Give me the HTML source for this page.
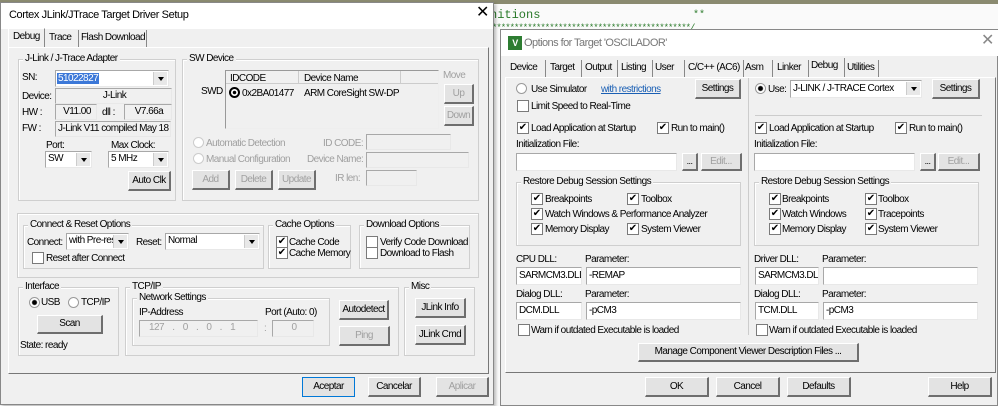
<!DOCTYPE html>
<html><head><style>
*{box-sizing:border-box;margin:0;padding:0}
body{width:998px;height:406px;overflow:hidden;position:relative;background:#fafafa;font-family:"Liberation Sans",sans-serif;font-size:10px;letter-spacing:-0.55px;color:#000}
div,span{position:absolute}
.t{white-space:nowrap;line-height:13px}
.gr{color:#a0a0a0}
.f{background:#fff;border:1px solid #a8a8a8;border-right-color:#e8e8e8;border-bottom-color:#e8e8e8;white-space:nowrap;overflow:hidden;line-height:14px;padding-left:2px}
.fd{background:#f0f0f0}
.b{background:#e3e3e3;border:1px solid #fff;border-right:2px solid #6e6e6e;border-bottom:2px solid #6e6e6e;text-align:center;white-space:nowrap}
.g{border:1px solid #cfcfcf;box-shadow:1px 1px 0 #fff inset}
.gt{background:#f0f0f0;padding:0 2px;top:-8px;left:4px;white-space:nowrap;line-height:13px}
.cb{width:12px;height:12px;background:#fff;border:1px solid #7a7a7a;font-size:10px;line-height:10px;text-align:center;letter-spacing:0}
.rd{width:11px;height:11px;border-radius:50%;background:#fff;border:1px solid #9a9a9a}
.dd{width:14px;height:13px;right:1px;top:1px;background:#e8e8e8;border-left:1px solid #ccc}
.dd:after{content:"";position:absolute;left:4px;top:5px;border:3px solid transparent;border-top:4px solid #000}
.tab{top:0;height:17px;line-height:16px;white-space:nowrap;border-right:1px solid #888}
</style></head><body>
<div style="left:0;top:0;width:998px;height:4px;background:#8a8a70"></div>
<div class="t" style="left:490px;top:9px;font-family:'Liberation Mono',monospace;font-size:12px;letter-spacing:0;color:#2a7a2a">nitions</div>
<div class="t" style="left:693px;top:9px;font-family:'Liberation Mono',monospace;font-size:10px;letter-spacing:0;color:#2a7a2a">**</div>
<div class="t" style="left:492px;top:22px;font-family:'Liberation Mono',monospace;font-size:9px;color:#2a7a2a;letter-spacing:-1px">*********************************************/</div>

<!-- RIGHT DIALOG -->
<div style="left:500px;top:29px;width:498px;height:377px;background:#f0f0f0;border:1px solid #888">
 <div style="left:0;top:0;width:497px;height:26px;background:#fff"></div>
 <div style="left:7px;top:6px;width:14px;height:14px;background:#2e7d32;color:#fff;font-size:9px;text-align:center;line-height:14px;font-weight:bold">V</div>
 <div class="t" style="left:23px;top:7px;font-size:11px;color:#777">Options for Target 'OSCILADOR'</div>
 <div class="t" style="left:480px;top:4px;font-size:16px;color:#888">✕</div>
 <div style="left:4px;top:30px;width:490px;height:17px">
  <span class="tab" style="left:5px;width:36px">Device</span>
  <span class="tab" style="left:45px;width:32px">Target</span>
  <span class="tab" style="left:80px;width:33px">Output</span>
  <span class="tab" style="left:116px;width:32px">Listing</span>
  <span class="tab" style="left:150px;width:30px">User</span>
  <span class="tab" style="left:183px;width:56px">C/C++ (AC6)</span>
  <span class="tab" style="left:240px;width:28px">Asm</span>
  <span class="tab" style="left:272px;width:32px">Linker</span>
  <span class="tab" style="left:306px;top:-2px;width:34px;height:19px;background:#f0f0f0">Debug</span>
  <span class="tab" style="left:342px;width:32px">Utilities</span>
 </div>
 <div style="left:4px;top:47px;width:491px;height:296px;border:1px solid #fff;border-right:1px solid #777;border-bottom:1px solid #777"></div>
 <div style="left:247px;top:48px;width:1px;height:257px;background:#ccc"></div>
</div>
<div class="rd" style="left:516px;top:83px"></div><div class="t" style="left:531px;top:83px">Use Simulator</div>
<div class="t" style="left:601px;top:83px;color:#1a5fb4;text-decoration:underline">with restrictions</div>
<div class="b" style="left:695px;top:79px;width:46px;height:20px;line-height:17px">Settings</div>
<div class="cb" style="left:517px;top:100px"></div><div class="t" style="left:531px;top:100px">Limit Speed to Real-Time</div>
<div class="rd" style="left:755px;top:83px;background:radial-gradient(#000 2px,#fff 3px)"></div><div class="t" style="left:768px;top:83px">Use:</div>
<div class="f" style="left:790px;top:80px;width:132px;height:18px;line-height:15px">J-LINK / J-TRACE Cortex<span class="dd"></span></div>
<div class="b" style="left:932px;top:79px;width:48px;height:20px;line-height:17px">Settings</div>
<div style="left:755px;top:115px;width:227px;height:1px;background:#ccc"></div>

<div class="cb" style="left:517px;top:122px">✔</div><div class="t" style="left:531px;top:122px">Load Application at Startup</div>
<div class="cb" style="left:657px;top:122px">✔</div><div class="t" style="left:671px;top:122px">Run to main()</div>
<div class="t" style="left:516px;top:138px">Initialization File:</div>
<div class="f" style="left:516px;top:153px;width:161px;height:18px"></div>
<div class="b" style="left:682px;top:153px;width:16px;height:18px;font-size:9px;line-height:14px">...</div>
<div class="b gr" style="left:701px;top:153px;width:41px;height:18px;line-height:15px">Edit...</div>
<div class="g" style="left:516px;top:182px;width:225px;height:64px"><span class="gt">Restore Debug Session Settings</span></div>
<div class="cb" style="left:531px;top:193px">✔</div><div class="t" style="left:545px;top:193px">Breakpoints</div>
<div class="cb" style="left:627px;top:193px">✔</div><div class="t" style="left:641px;top:193px">Toolbox</div>
<div class="cb" style="left:531px;top:208px">✔</div><div class="t" style="left:545px;top:208px">Watch Windows &amp; Performance Analyzer</div>
<div class="cb" style="left:531px;top:223px">✔</div><div class="t" style="left:545px;top:223px">Memory Display</div>
<div class="cb" style="left:627px;top:223px">✔</div><div class="t" style="left:641px;top:223px">System Viewer</div>
<div class="t" style="left:516px;top:253px">CPU DLL:</div><div class="t" style="left:585px;top:253px">Parameter:</div>
<div class="f" style="left:516px;top:267px;width:66px;height:18px;line-height:15px">SARMCM3.DLL</div>
<div class="f" style="left:586px;top:267px;width:155px;height:18px;line-height:15px">-REMAP</div>
<div class="t" style="left:516px;top:288px">Dialog DLL:</div><div class="t" style="left:585px;top:288px">Parameter:</div>
<div class="f" style="left:516px;top:302px;width:66px;height:18px;line-height:15px">DCM.DLL</div>
<div class="f" style="left:586px;top:302px;width:155px;height:18px;line-height:15px">-pCM3</div>
<div class="cb" style="left:518px;top:324px"></div><div class="t" style="left:531px;top:324px">Warn if outdated Executable is loaded</div>

<div class="cb" style="left:755px;top:122px">✔</div><div class="t" style="left:769px;top:122px">Load Application at Startup</div>
<div class="cb" style="left:895px;top:122px">✔</div><div class="t" style="left:909px;top:122px">Run to main()</div>
<div class="t" style="left:754px;top:138px">Initialization File:</div>
<div class="f" style="left:754px;top:153px;width:161px;height:18px"></div>
<div class="b" style="left:920px;top:153px;width:16px;height:18px;font-size:9px;line-height:14px">...</div>
<div class="b gr" style="left:938px;top:153px;width:42px;height:18px;line-height:15px">Edit...</div>
<div class="g" style="left:754px;top:182px;width:225px;height:64px"><span class="gt">Restore Debug Session Settings</span></div>
<div class="cb" style="left:769px;top:193px">✔</div><div class="t" style="left:782px;top:193px">Breakpoints</div>
<div class="cb" style="left:865px;top:193px">✔</div><div class="t" style="left:878px;top:193px">Toolbox</div>
<div class="cb" style="left:769px;top:208px">✔</div><div class="t" style="left:782px;top:208px">Watch Windows</div>
<div class="cb" style="left:865px;top:208px">✔</div><div class="t" style="left:878px;top:208px">Tracepoints</div>
<div class="cb" style="left:769px;top:223px">✔</div><div class="t" style="left:782px;top:223px">Memory Display</div>
<div class="cb" style="left:865px;top:223px">✔</div><div class="t" style="left:878px;top:223px">System Viewer</div>
<div class="t" style="left:754px;top:253px">Driver DLL:</div><div class="t" style="left:822px;top:253px">Parameter:</div>
<div class="f" style="left:755px;top:267px;width:64px;height:18px;line-height:15px">SARMCM3.DLL</div>
<div class="f" style="left:823px;top:267px;width:155px;height:18px"></div>
<div class="t" style="left:754px;top:288px">Dialog DLL:</div><div class="t" style="left:822px;top:288px">Parameter:</div>
<div class="f" style="left:755px;top:302px;width:64px;height:18px;line-height:15px">TCM.DLL</div>
<div class="f" style="left:823px;top:302px;width:155px;height:18px;line-height:15px">-pCM3</div>
<div class="cb" style="left:756px;top:324px"></div><div class="t" style="left:769px;top:324px">Warn if outdated Executable is loaded</div>
<div class="b" style="left:638px;top:343px;width:221px;height:19px;line-height:16px">Manage Component Viewer Description Files ...</div>
<div class="b" style="left:645px;top:377px;width:64px;height:20px;line-height:17px">OK</div>
<div class="b" style="left:716px;top:377px;width:64px;height:20px;line-height:17px">Cancel</div>
<div class="b" style="left:787px;top:377px;width:64px;height:20px;line-height:17px">Defaults</div>
<div class="b" style="left:928px;top:377px;width:64px;height:20px;line-height:17px">Help</div>

<!-- LEFT DIALOG -->
<div style="left:0;top:2px;width:494px;height:403px;background:#f0f0f0;border:1px solid #888;box-shadow:2px 2px 3px rgba(0,0,0,.25)">
 <div style="left:0;top:0;width:492px;height:26px;background:#fff"></div>
 <div class="t" style="left:8px;top:6px;font-size:11px;letter-spacing:-0.4px">Cortex JLink/JTrace Target Driver Setup</div>
 <div class="t" style="left:475px;top:3px;font-size:16px">✕</div>
</div>
<div style="left:8px;top:29px;width:140px;height:18px">
 <span class="tab" style="left:0;top:-1px;width:37px;height:19px;padding-left:4px;border:1px solid #fff;border-right:1px solid #888;border-bottom:none">Debug</span>
 <span class="tab" style="left:41px;top:1px;width:30px;padding-left:0">Trace</span>
 <span class="tab" style="left:73px;top:1px;width:66px">Flash Download</span>
</div>
<div style="left:8px;top:47px;width:481px;height:327px;border:1px solid #fff;border-right:1px solid #777;border-bottom:1px solid #777"></div>

<div class="g" style="left:18px;top:59px;width:158px;height:142px"><span class="gt">J-Link / J-Trace Adapter</span></div>
<div class="t" style="left:22px;top:71px">SN:</div>
<div class="f" style="left:55px;top:70px;width:114px;height:17px;padding:1px"><span style="position:static;background:#3c78d8;color:#fff;padding:0 1px">51022827</span><span class="dd"></span></div>
<div class="t" style="left:22px;top:90px">Device:</div>
<div class="f fd" style="left:55px;top:88px;width:117px;height:16px;text-align:center">J-Link</div>
<div class="t" style="left:22px;top:106px">HW :</div>
<div class="f fd" style="left:55px;top:104px;width:42px;height:16px;text-align:center">V11.00</div>
<div class="t" style="left:102px;top:106px">dll :</div>
<div class="f fd" style="left:124px;top:104px;width:48px;height:16px;text-align:center">V7.66a</div>
<div class="t" style="left:22px;top:122px">FW :</div>
<div class="f fd" style="left:55px;top:121px;width:116px;height:16px">J-Link V11 compiled May 18 2</div>
<div class="t" style="left:46px;top:139px">Port:</div>
<div class="t" style="left:111px;top:139px">Max Clock:</div>
<div class="f" style="left:45px;top:151px;width:47px;height:17px">SW<span class="dd"></span></div>
<div class="f" style="left:108px;top:151px;width:61px;height:17px">5 MHz<span class="dd"></span></div>
<div class="b" style="left:128px;top:171px;width:43px;height:20px;line-height:17px">Auto Clk</div>

<div class="g" style="left:182px;top:59px;width:297px;height:142px"><span class="gt">SW Device</span></div>
<div class="t" style="left:201px;top:85px">SWD</div>
<div style="left:225px;top:70px;width:214px;height:59px;background:#f0f0f0;border:1px solid #999;border-right-color:#eee;border-bottom-color:#eee"></div>
<div style="left:226px;top:71px;width:212px;height:13px;border-bottom:1px solid #ccc"></div>
<div style="left:298px;top:71px;width:1px;height:13px;background:#ccc"></div>
<div style="left:400px;top:71px;width:1px;height:13px;background:#ccc"></div>
<div class="t" style="left:230px;top:72px">IDCODE</div>
<div class="t" style="left:304px;top:72px">Device Name</div>
<div class="rd" style="left:229px;top:87px;border:2px solid #000;background:radial-gradient(#000 1.5px,#fff 2px)"></div>
<div class="t" style="left:242px;top:87px">0x2BA01477</div>
<div class="t" style="left:304px;top:87px">ARM CoreSight SW-DP</div>
<div class="t gr" style="left:443px;top:69px">Move</div>
<div class="b gr" style="left:444px;top:84px;width:30px;height:20px;line-height:17px">Up</div>
<div class="b gr" style="left:444px;top:106px;width:30px;height:20px;line-height:17px">Down</div>
<div class="rd" style="left:193px;top:137px;border-color:#ccc"></div><div class="t gr" style="left:206px;top:137px">Automatic Detection</div>
<div class="rd" style="left:193px;top:153px;border-color:#ccc"></div><div class="t gr" style="left:206px;top:153px">Manual Configuration</div>
<div class="t gr" style="left:323px;top:137px">ID CODE:</div>
<div class="f fd" style="left:366px;top:134px;width:85px;height:16px"></div>
<div class="t gr" style="left:307px;top:153px">Device Name:</div>
<div class="f fd" style="left:366px;top:152px;width:103px;height:16px"></div>
<div class="t gr" style="left:335px;top:172px">IR len:</div>
<div class="f fd" style="left:366px;top:170px;width:51px;height:16px"></div>
<div class="b gr" style="left:192px;top:170px;width:38px;height:20px;line-height:17px">Add</div>
<div class="b gr" style="left:235px;top:170px;width:38px;height:20px;line-height:17px">Delete</div>
<div class="b gr" style="left:278px;top:170px;width:38px;height:20px;line-height:17px">Update</div>

<div class="g" style="left:17px;top:213px;width:462px;height:65px"></div>
<div class="g" style="left:23px;top:225px;width:241px;height:44px"><span class="gt">Connect &amp; Reset Options</span></div>
<div class="t" style="left:27px;top:236px">Connect:</div>
<div class="f" style="left:66px;top:233px;width:63px;height:17px;line-height:13px">with Pre-rese<span class="dd"></span></div>
<div class="t" style="left:136px;top:236px">Reset:</div>
<div class="f" style="left:165px;top:233px;width:95px;height:17px;line-height:13px">Normal<span class="dd"></span></div>
<div class="cb" style="left:32px;top:252px"></div><div class="t" style="left:46px;top:252px">Reset after Connect</div>
<div class="g" style="left:268px;top:225px;width:83px;height:44px"><span class="gt">Cache Options</span></div>
<div class="cb" style="left:276px;top:236px">✔</div><div class="t" style="left:289px;top:236px">Cache Code</div>
<div class="cb" style="left:276px;top:247px">✔</div><div class="t" style="left:289px;top:247px">Cache Memory</div>
<div class="g" style="left:359px;top:225px;width:111px;height:44px"><span class="gt">Download Options</span></div>
<div class="cb" style="left:366px;top:236px"></div><div class="t" style="left:380px;top:236px">Verify Code Download</div>
<div class="cb" style="left:366px;top:247px"></div><div class="t" style="left:380px;top:247px">Download to Flash</div>

<div class="g" style="left:18px;top:287px;width:101px;height:69px"><span class="gt">Interface</span></div>
<div class="rd" style="left:29px;top:297px;background:radial-gradient(#000 2px,#fff 3px)"></div><div class="t" style="left:41px;top:296px">USB</div>
<div class="rd" style="left:68px;top:297px"></div><div class="t" style="left:81px;top:296px">TCP/IP</div>
<div class="b" style="left:37px;top:315px;width:66px;height:19px;line-height:16px">Scan</div>
<div class="t" style="left:20px;top:339px">State: ready</div>
<div class="g" style="left:125px;top:287px;width:274px;height:69px"><span class="gt">TCP/IP</span></div>
<div class="g" style="left:132px;top:298px;width:198px;height:48px"><span class="gt">Network Settings</span></div>
<div class="t" style="left:139px;top:306px">IP-Address</div>
<div class="t" style="left:265px;top:306px">Port (Auto: 0)</div>
<div class="f fd gr" style="left:139px;top:320px;width:119px;height:17px;padding-left:9px;word-spacing:6px">127 . 0 . 0 . 1</div>
<div class="t gr" style="left:264px;top:322px">:</div>
<div class="f fd gr" style="left:272px;top:320px;width:42px;height:17px;text-align:center">0</div>
<div class="b" style="left:339px;top:300px;width:50px;height:20px;line-height:17px">Autodetect</div>
<div class="b gr" style="left:339px;top:326px;width:51px;height:20px;line-height:17px">Ping</div>
<div class="g" style="left:404px;top:287px;width:71px;height:69px"><span class="gt">Misc</span></div>
<div class="b" style="left:415px;top:298px;width:51px;height:20px;line-height:17px">JLink Info</div>
<div class="b" style="left:415px;top:325px;width:51px;height:20px;line-height:17px">JLink Cmd</div>
<div class="b" style="left:302px;top:377px;width:53px;height:20px;line-height:17px;border:1px solid #0078d7">Aceptar</div>
<div class="b" style="left:368px;top:377px;width:53px;height:20px;line-height:17px">Cancelar</div>
<div class="b gr" style="left:436px;top:377px;width:53px;height:20px;line-height:17px">Aplicar</div>
</body></html>
